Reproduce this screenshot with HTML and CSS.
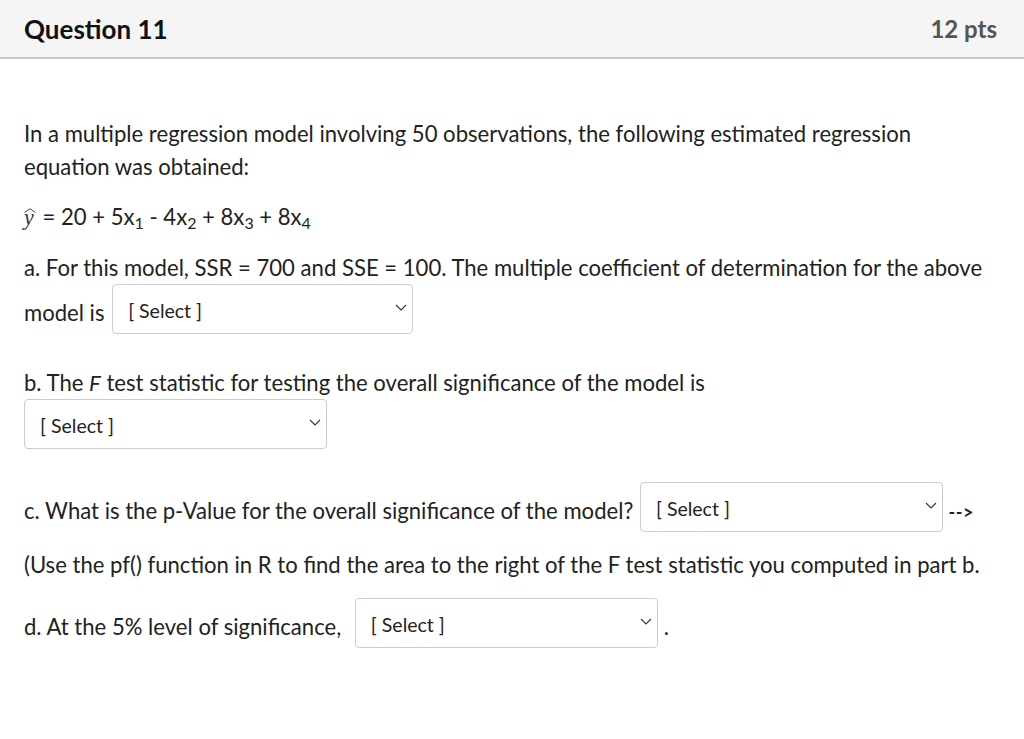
FILE: index.html
```html
<!DOCTYPE html>
<html>
<head>
<meta charset="utf-8">
<link rel="stylesheet" href="styles.css">
</head>
<body>
<div class="question">
  <div class="header">
    <h2 class="title">Question 11</h2>
    <span class="pts">12 pts</span>
  </div>
  <div class="content">
    <p class="intro">In a multiple regression model involving 50 observations, the following estimated regression equation was obtained:</p>
    <p class="eq"><span class="yhat">y<svg class="hat" viewBox="0 0 12 5" width="12" height="5"><path d="M0.5 4.5 L6 0.8 L11.5 4.5" fill="none" stroke="#444" stroke-width="1"/></svg></span> = 20 + 5x<sub>1</sub> - 4x<sub>2</sub> + 8x<sub>3</sub> + 8x<sub>4</sub></p>
    <p class="part-a">a. For this model, SSR = 700 and SSE = 100. The multiple coefficient of determination for the above model is <span class="select"><span class="sel-text">[ Select ]</span><svg class="chev" viewBox="0 0 12 7" width="12" height="7"><path d="M1 1 L6 6 L11 1" fill="none" stroke="#333" stroke-width="1.1"/></svg></span></p>
    <p class="part-b">b. The <em>F</em> test statistic for testing the overall significance of the model is<br><span class="select"><span class="sel-text">[ Select ]</span><svg class="chev" viewBox="0 0 12 7" width="12" height="7"><path d="M1 1 L6 6 L11 1" fill="none" stroke="#333" stroke-width="1.1"/></svg></span></p>
    <p class="part-c">c. What is the p-Value for the overall significance of the model? <span class="select"><span class="sel-text">[ Select ]</span><svg class="chev" viewBox="0 0 12 7" width="12" height="7"><path d="M1 1 L6 6 L11 1" fill="none" stroke="#333" stroke-width="1.1"/></svg></span> <span class="arrow">--&gt;</span></p>
    <p class="note">(Use the pf() function in R to find the area to the right of the F test statistic you computed in part b.</p>
    <p class="part-d">d. At the 5% level of significance, <span class="select"><span class="sel-text">[ Select ]</span><svg class="chev" viewBox="0 0 12 7" width="12" height="7"><path d="M1 1 L6 6 L11 1" fill="none" stroke="#333" stroke-width="1.1"/></svg></span>.</p>
  </div>
</div>
</body>
</html>
```
FILE: styles.css
```css
html, body {
  margin: 0;
  padding: 0;
  background: #ffffff;
}
body {
  font-family: Lato, "Liberation Sans", sans-serif;
  color: #222222;
}
.header {
  height: 57px;
  background: #f5f5f5;
  border-bottom: 2px solid #c4c8cb;
  display: flex;
  align-items: center;
  justify-content: space-between;
  padding: 0 27px 0 24px;
}
.title {
  margin: 0;
  font-size: 26px;
  font-weight: 700;
  color: #111111;
}
.pts {
  font-size: 24px;
  font-weight: 700;
  color: #555555;
}
.content {
  padding: 0 34px 0 24px;
  font-size: 22.1px;
  line-height: 33px;
}
.content p {
  margin: 0;
}
.intro {
  padding-top: 58px;
}
.eq {
  margin-top: 17px !important;
}
.eq sub {
  font-size: 16px;
  vertical-align: -4px;
  line-height: 0;
}
.yhat {
  font-family: "Liberation Serif", serif;
  font-style: italic;
  position: relative;
  color: #333;
  margin-right: 3px;
}
.hat {
  position: absolute;
  left: 0;
  top: 3px;
}
.part-a {
  margin-top: 17px !important;
}
.part-b {
  margin-top: 32px !important;
}
.part-c {
  margin-top: 33px !important;
}
.note {
  margin-top: 16px !important;
}
.part-d {
  margin-top: 17px !important;
}
.select {
  display: inline-flex;
  align-items: center;
  justify-content: space-between;
  box-sizing: border-box;
  width: 301px;
  height: 50px;
  padding: 0 5px 0 15px;
  border: 1px solid #c7cdd1;
  border-radius: 4px;
  background: #fff;
  vertical-align: 4px;
  font-size: 19.5px;
  color: #222;
}
.part-a .select {
  margin-left: 2px;
}
.sel-text {
  position: relative;
  top: 1px;
}
.chev {
  position: relative;
  top: -2px;
}
.part-b .select,
.part-c .select,
.part-d .select {
  width: 303px;
}
.part-c .select {
  margin-left: 1px;
}
.part-d .select {
  margin-left: 8px;
  margin-right: 6px;
}
.arrow {
  font-size: 18px;
  font-weight: 700;
  letter-spacing: 0.5px;
}
```
